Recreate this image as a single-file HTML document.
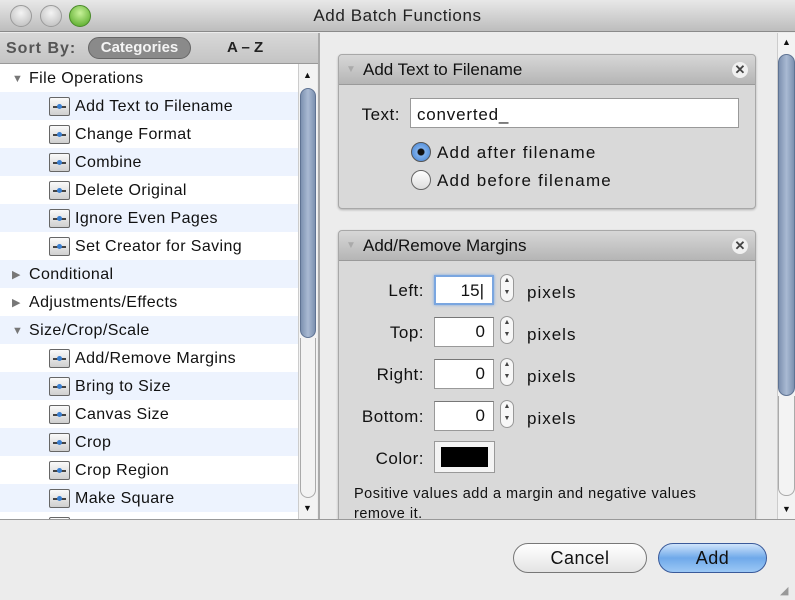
<!DOCTYPE html>
<html><head><style>
*{margin:0;padding:0;box-sizing:border-box}
body{width:795px;height:600px;overflow:hidden;background:#ececec;font-family:"Liberation Sans",sans-serif;color:#111;position:relative}
.abs{position:absolute}
#title{left:0;top:0;width:795px;height:32px;background:linear-gradient(#e8e8e8,#bdbdbd);border-bottom:1px solid #8a8a8a;text-align:center;font-size:17px;letter-spacing:0.6px;line-height:32px;color:#222}
.light{width:22px;height:22px;border-radius:50%;top:5px;background:radial-gradient(circle at 50% 35%,#f4f4f4,#b8b8b8);border:1px solid #9a9a9a}
#sortbar{left:0;top:33px;width:318px;height:31px;background:linear-gradient(#d8d8d8,#c4c4c4);border-bottom:1px solid #999}
#list{left:0;top:64px;width:298px;height:455px;background:#fff;overflow:hidden}
.row{height:28px;font-size:16px;letter-spacing:0.4px;line-height:30px;position:relative;white-space:nowrap}
.row:nth-child(even){background:#edf3fe}
.cat{padding-left:29px}
.tri{position:absolute;left:12px;top:0;color:#777;font-size:11px}
.item{padding-left:75px}
.ico{position:absolute;left:49px;top:5px;width:21px;height:19px;border:1px solid #666;border-radius:2px;background:linear-gradient(#fafafa,#cfcfcf)}
.ico:after{content:"";position:absolute;left:3px;right:3px;top:8px;height:2px;background:#444}
.ico:before{content:"";position:absolute;left:7px;top:6px;width:5px;height:5px;border-radius:50%;background:#3a7fd0;z-index:1}
.sb{background:#f3f3f3;border-left:1px solid #ccc}
.thumb{border-radius:9px;background:linear-gradient(90deg,#7d91b0,#a9bad3,#7d91b0);border:1px solid #5f7393}
.panel{left:338px;width:418px;background:#d9d9d9;border:1px solid #a8a8a8;border-radius:4px;box-shadow:0 1px 2px rgba(0,0,0,.25)}
.ph{height:30px;background:linear-gradient(#d7d7d7,#b5b5b5);border-bottom:1px solid #9a9a9a;font-size:17px;line-height:29px;padding-left:24px;position:relative;border-radius:4px 4px 0 0}
.ph .x{position:absolute;right:7px;top:7px;width:16px;height:16px;border-radius:50%;background:#f0f0f0;font-size:13px;line-height:16px;text-align:center;font-weight:bold;color:#444}
.ph .t{position:absolute;left:7px;top:0;color:#aaa;font-size:10px}
.lbl{font-size:17px;text-align:right;width:90px;letter-spacing:0.5px}
.field{background:#fff;border:1px solid #999;border-top-color:#777;font-size:17px;text-align:right;padding-right:8px;line-height:28px;height:30px;width:60px}
.step{width:14px;height:28px;border:1px solid #999;border-radius:7px;background:#f7f7f7;font-size:7px;line-height:12px;text-align:center;color:#444}
.px{font-size:17px;letter-spacing:1px}
.btn{top:543px;height:30px;border-radius:15px;font-size:18px;letter-spacing:0.5px;text-align:center;line-height:28px;border:1px solid #777}
.rad{font-size:17px;line-height:22px;letter-spacing:1.2px}
</style></head><body>
<div id="title" class="abs">Add Batch Functions</div>
<div class="abs light" style="left:10px"></div>
<div class="abs light" style="left:40px"></div>
<div class="abs light" style="left:69px;background:radial-gradient(circle at 50% 35%,#c8f29a,#4ba21c);border-color:#4a8a2a"></div>
<div id="sortbar" class="abs"></div>
<div class="abs" style="left:6px;top:38px;font-size:16px;letter-spacing:1px;font-weight:bold;color:#555;line-height:22px">Sort By:</div>
<div class="abs" style="left:88px;top:37px;width:103px;height:22px;border-radius:11px;background:#8a8a8a;border:1px solid #666;color:#f4f4f4;font-weight:bold;font-size:15px;text-align:center;line-height:20px">Categories</div>
<div class="abs" style="left:227px;top:38px;font-size:15px;font-weight:bold;color:#222;line-height:20px">A – Z</div>
<div class="abs" style="left:318px;top:33px;width:2px;height:486px;background:#aaa"></div>
<div id="list" class="abs">
<div class="row cat"><span class="tri">▼</span>File Operations</div>
<div class="row item"><span class="ico"></span>Add Text to Filename</div>
<div class="row item"><span class="ico"></span>Change Format</div>
<div class="row item"><span class="ico"></span>Combine</div>
<div class="row item"><span class="ico"></span>Delete Original</div>
<div class="row item"><span class="ico"></span>Ignore Even Pages</div>
<div class="row item"><span class="ico"></span>Set Creator for Saving</div>
<div class="row cat"><span class="tri">▶</span>Conditional</div>
<div class="row cat"><span class="tri">▶</span>Adjustments/Effects</div>
<div class="row cat"><span class="tri">▼</span>Size/Crop/Scale</div>
<div class="row item"><span class="ico"></span>Add/Remove Margins</div>
<div class="row item"><span class="ico"></span>Bring to Size</div>
<div class="row item"><span class="ico"></span>Canvas Size</div>
<div class="row item"><span class="ico"></span>Crop</div>
<div class="row item"><span class="ico"></span>Crop Region</div>
<div class="row item"><span class="ico"></span>Make Square</div>
<div class="row item"><span class="ico"></span></div>
</div>
<div class="abs sb" style="left:298px;top:64px;width:19px;height:455px"></div>
<div class="abs" style="left:303px;top:70px;font-size:9px">▲</div>
<div class="abs" style="left:303px;top:503px;font-size:9px">▼</div>
<div class="abs thumb" style="left:300px;top:88px;width:16px;height:250px"></div>
<div class="abs" style="left:300px;top:338px;width:16px;height:160px;border:1px solid #aaa;border-top:none;border-radius:0 0 8px 8px"></div>
<div class="abs sb" style="left:777px;top:33px;width:18px;height:486px"></div>
<div class="abs" style="left:782px;top:37px;font-size:9px">▲</div>
<div class="abs" style="left:782px;top:504px;font-size:9px">▼</div>
<div class="abs thumb" style="left:778px;top:54px;width:17px;height:342px"></div>
<div class="abs" style="left:778px;top:396px;width:17px;height:100px;border:1px solid #aaa;border-top:none;border-radius:0 0 8px 8px"></div>

<div class="abs panel" style="top:54px;height:155px">
<div class="ph"><span class="t">▼</span>Add Text to Filename<span class="x">✕</span></div>
</div>
<div class="abs lbl" style="left:310px;top:104px;line-height:22px">Text:</div>
<div class="abs" style="left:410px;top:98px;width:329px;height:30px;background:#fff;border:1px solid #999;font-size:17px;letter-spacing:0.8px;line-height:32px;padding-left:6px">converted_</div>
<div class="abs" style="left:411px;top:142px;width:20px;height:20px;border-radius:50%;border:1px solid #555;background:radial-gradient(circle,#111 0 3px,#7fb0ec 4px,#3f7fd0)"></div>
<div class="abs rad" style="left:437px;top:142px">Add after filename</div>
<div class="abs" style="left:411px;top:170px;width:20px;height:20px;border-radius:50%;border:1px solid #666;background:linear-gradient(#fff,#ddd)"></div>
<div class="abs rad" style="left:437px;top:170px">Add before filename</div>

<div class="abs panel" style="top:230px;height:300px">
<div class="ph"><span class="t">▼</span>Add/Remove Margins<span class="x">✕</span></div>
</div>
<div class="abs lbl" style="left:334px;top:281px">Left:</div>
<div class="abs field" style="left:434px;top:275px;border:2px solid #7aa6e0;box-shadow:0 0 3px #7aa6e0">15|</div>
<div class="abs lbl" style="left:334px;top:323px">Top:</div>
<div class="abs field" style="left:434px;top:317px">0</div>
<div class="abs lbl" style="left:334px;top:365px">Right:</div>
<div class="abs field" style="left:434px;top:359px">0</div>
<div class="abs lbl" style="left:334px;top:407px">Bottom:</div>
<div class="abs field" style="left:434px;top:401px">0</div>
<div class="abs step" style="left:500px;top:274px">▲<br>▼</div>
<div class="abs step" style="left:500px;top:316px">▲<br>▼</div>
<div class="abs step" style="left:500px;top:358px">▲<br>▼</div>
<div class="abs step" style="left:500px;top:400px">▲<br>▼</div>
<div class="abs px" style="left:527px;top:283px">pixels</div>
<div class="abs px" style="left:527px;top:325px">pixels</div>
<div class="abs px" style="left:527px;top:367px">pixels</div>
<div class="abs px" style="left:527px;top:409px">pixels</div>
<div class="abs lbl" style="left:334px;top:449px">Color:</div>
<div class="abs" style="left:434px;top:441px;width:61px;height:32px;border:1px solid #999;background:#f4f4f4;padding:5px 6px"><div style="width:100%;height:100%;background:#000"></div></div>
<div class="abs" style="left:354px;top:484px;font-size:14.5px;letter-spacing:0.5px;line-height:20px;width:385px">Positive values add a margin and negative values remove it.</div>

<div class="abs" style="left:0;top:519px;width:795px;height:81px;background:#ececec;border-top:1px solid #999"></div>
<div class="abs btn" style="left:513px;width:134px;background:linear-gradient(#fff,#e4e4e4)">Cancel</div>
<div class="abs btn" style="left:658px;width:109px;background:linear-gradient(#cfe4fb,#6fa9ea 50%,#9cc8f5);border-color:#3a5a9a">Add</div>
<div class="abs" style="left:780px;top:584px;font-size:11px;color:#999">◢</div>
</body></html>
